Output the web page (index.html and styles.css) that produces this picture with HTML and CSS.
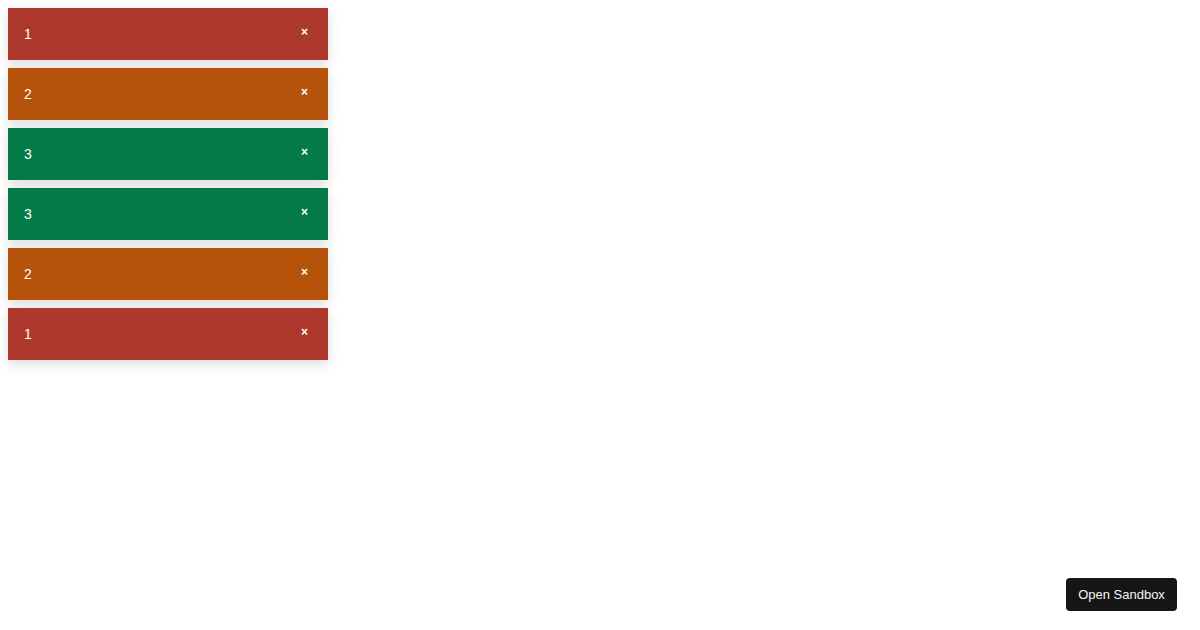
FILE: index.html
```html
<!DOCTYPE html>
<html>
<head>
<meta charset="utf-8">
<link rel="stylesheet" href="styles.css">
</head>
<body>
<div class="stack">
  <div class="toast red"><span class="msg">1</span><span class="close">×</span></div>
  <div class="toast orange"><span class="msg">2</span><span class="close">×</span></div>
  <div class="toast green"><span class="msg">3</span><span class="close">×</span></div>
  <div class="toast green"><span class="msg">3</span><span class="close">×</span></div>
  <div class="toast orange"><span class="msg">2</span><span class="close">×</span></div>
  <div class="toast red"><span class="msg">1</span><span class="close">×</span></div>
</div>
<button class="sandbox">Open Sandbox</button>
</body>
</html>
```
FILE: styles.css
```css
html, body { margin: 0; padding: 0; background: #fff; }
body { font-family: "Liberation Sans", Arial, sans-serif; width: 1200px; height: 630px; position: relative; overflow: hidden; }
.stack { display: flex; flex-direction: column; gap: 8px; padding: 8px; width: 320px; }
.toast { height: 52px; display: flex; align-items: center; justify-content: space-between; padding: 0 20px 0 16px; box-sizing: border-box; color: #fff; box-shadow: 0 4px 12px rgba(0,0,0,0.14); }
.msg { font-size: 14px; }
.close { font-size: 12px; font-weight: bold; margin-top: -5px; }
.red { background: #ae372b; }
.orange { background: #b45309; }
.green { background: #047a46; }
.sandbox { position: absolute; right: 23px; bottom: 19px; height: 33px; width: 111px; border: none; border-radius: 4px; background: #151515; color: #f5f5f5; font-family: "Liberation Sans", Arial, sans-serif; font-size: 13px; padding: 0; }
```
